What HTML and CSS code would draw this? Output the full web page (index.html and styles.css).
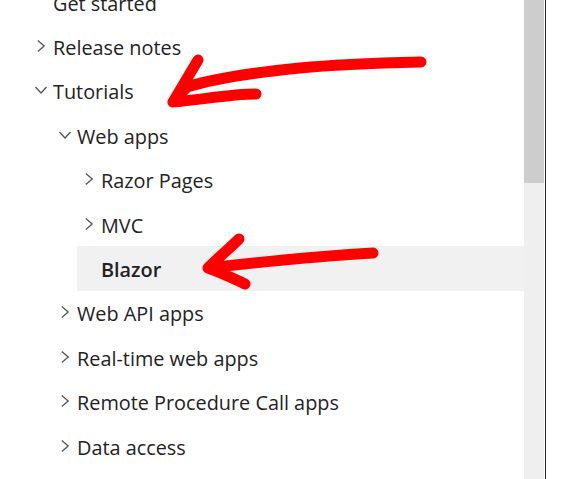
FILE: index.html
```html
<!DOCTYPE html>
<html lang="en">
<head>
<meta charset="utf-8">
<title>Docs navigation</title>
<link rel="stylesheet" href="styles.css">
</head>
<body>
<svg width="0" height="0" class="defs" aria-hidden="true">
  <symbol id="right" viewBox="0 0 24 24"><path d="M8.8 6.5 L15.2 12 L8.8 17.5" fill="none" stroke="#555" stroke-width="1.3"/></symbol>
  <symbol id="down" viewBox="0 0 24 24"><path d="M6.5 9 L12 15 L17.5 9" fill="none" stroke="#555" stroke-width="1.3"/></symbol>
</svg>
<div class="window">
  <nav class="toc">
    <ul class="tree root">
      <li><div class="row"><span class="slot"></span>Get started</div></li>
      <li><div class="row"><span class="slot"><svg class="chev"><use href="#right"/></svg></span>Release notes</div></li>
      <li><div class="row"><span class="slot"><svg class="chev"><use href="#down"/></svg></span>Tutorials</div>
        <ul class="tree">
          <li><div class="row"><span class="slot"><svg class="chev"><use href="#down"/></svg></span>Web apps</div>
            <ul class="tree">
              <li><div class="row"><span class="slot"><svg class="chev"><use href="#right"/></svg></span>Razor Pages</div></li>
              <li><div class="row"><span class="slot"><svg class="chev"><use href="#right"/></svg></span>MVC</div></li>
              <li><div class="row active"><span class="slot"></span>Blazor</div></li>
            </ul>
          </li>
          <li><div class="row"><span class="slot"><svg class="chev"><use href="#right"/></svg></span>Web API apps</div></li>
          <li><div class="row"><span class="slot"><svg class="chev"><use href="#right"/></svg></span>Real-time web apps</div></li>
          <li><div class="row"><span class="slot"><svg class="chev"><use href="#right"/></svg></span>Remote Procedure Call apps</div></li>
          <li><div class="row"><span class="slot"><svg class="chev"><use href="#right"/></svg></span>Data access</div></li>
        </ul>
      </li>
    </ul>
  </nav>
  <div class="scrollbar"><div class="thumb"></div></div>
  <div class="rule"></div>
</div>
<svg class="ink" viewBox="0 0 577 479" aria-hidden="true">
  <path d="M421 62 C380 63 340 64 300 68 C260 72 212 79 187 87 L173 102 L198 60 M173 102 C200 100 230 94 256 94"/>
  <path d="M373 253 C320 256 260 262 208 268 C220 256 230 248 239 239 M208 268 C220 272 232 278 245 284"/>
</svg>
</body>
</html>
```
FILE: styles.css
```css
html, body {
  margin: 0;
  height: 100%;
  background: #fff;
  overflow: hidden;
}
.defs {
  position: absolute;
}
.window {
  display: flex;
  height: 479px;
  width: 546px;
}
.toc {
  width: 524px;
  overflow: hidden;
  font-family: "Open Sans", "Noto Sans", sans-serif;
  font-size: 19.85px;
  color: #222;
}
.tree {
  list-style: none;
  margin: 0;
  padding: 0 0 0 24px;
}
.tree.root {
  margin-top: -20px;
  padding-left: 29px;
}
.row {
  display: flex;
  align-items: center;
  box-sizing: border-box;
  height: 44.4px;
  padding-top: 2px;
  white-space: nowrap;
}
.slot {
  display: flex;
  flex: 0 0 24px;
  align-items: center;
  justify-content: center;
  margin-top: -3px;
}
.chev {
  width: 24px;
  height: 24px;
}
.active {
  background: #f1f1f1;
  font-weight: 600;
}
.scrollbar {
  width: 20px;
  background: #efefef;
}
.thumb {
  height: 183px;
  background: #cdcdcd;
}
.rule {
  width: 1px;
  margin-left: 1px;
  background: #222;
}
.ink {
  position: absolute;
  top: 0;
  left: 0;
  width: 577px;
  height: 479px;
  fill: none;
  stroke: #fe0000;
  stroke-width: 11;
  stroke-linecap: round;
  stroke-linejoin: round;
}
```
